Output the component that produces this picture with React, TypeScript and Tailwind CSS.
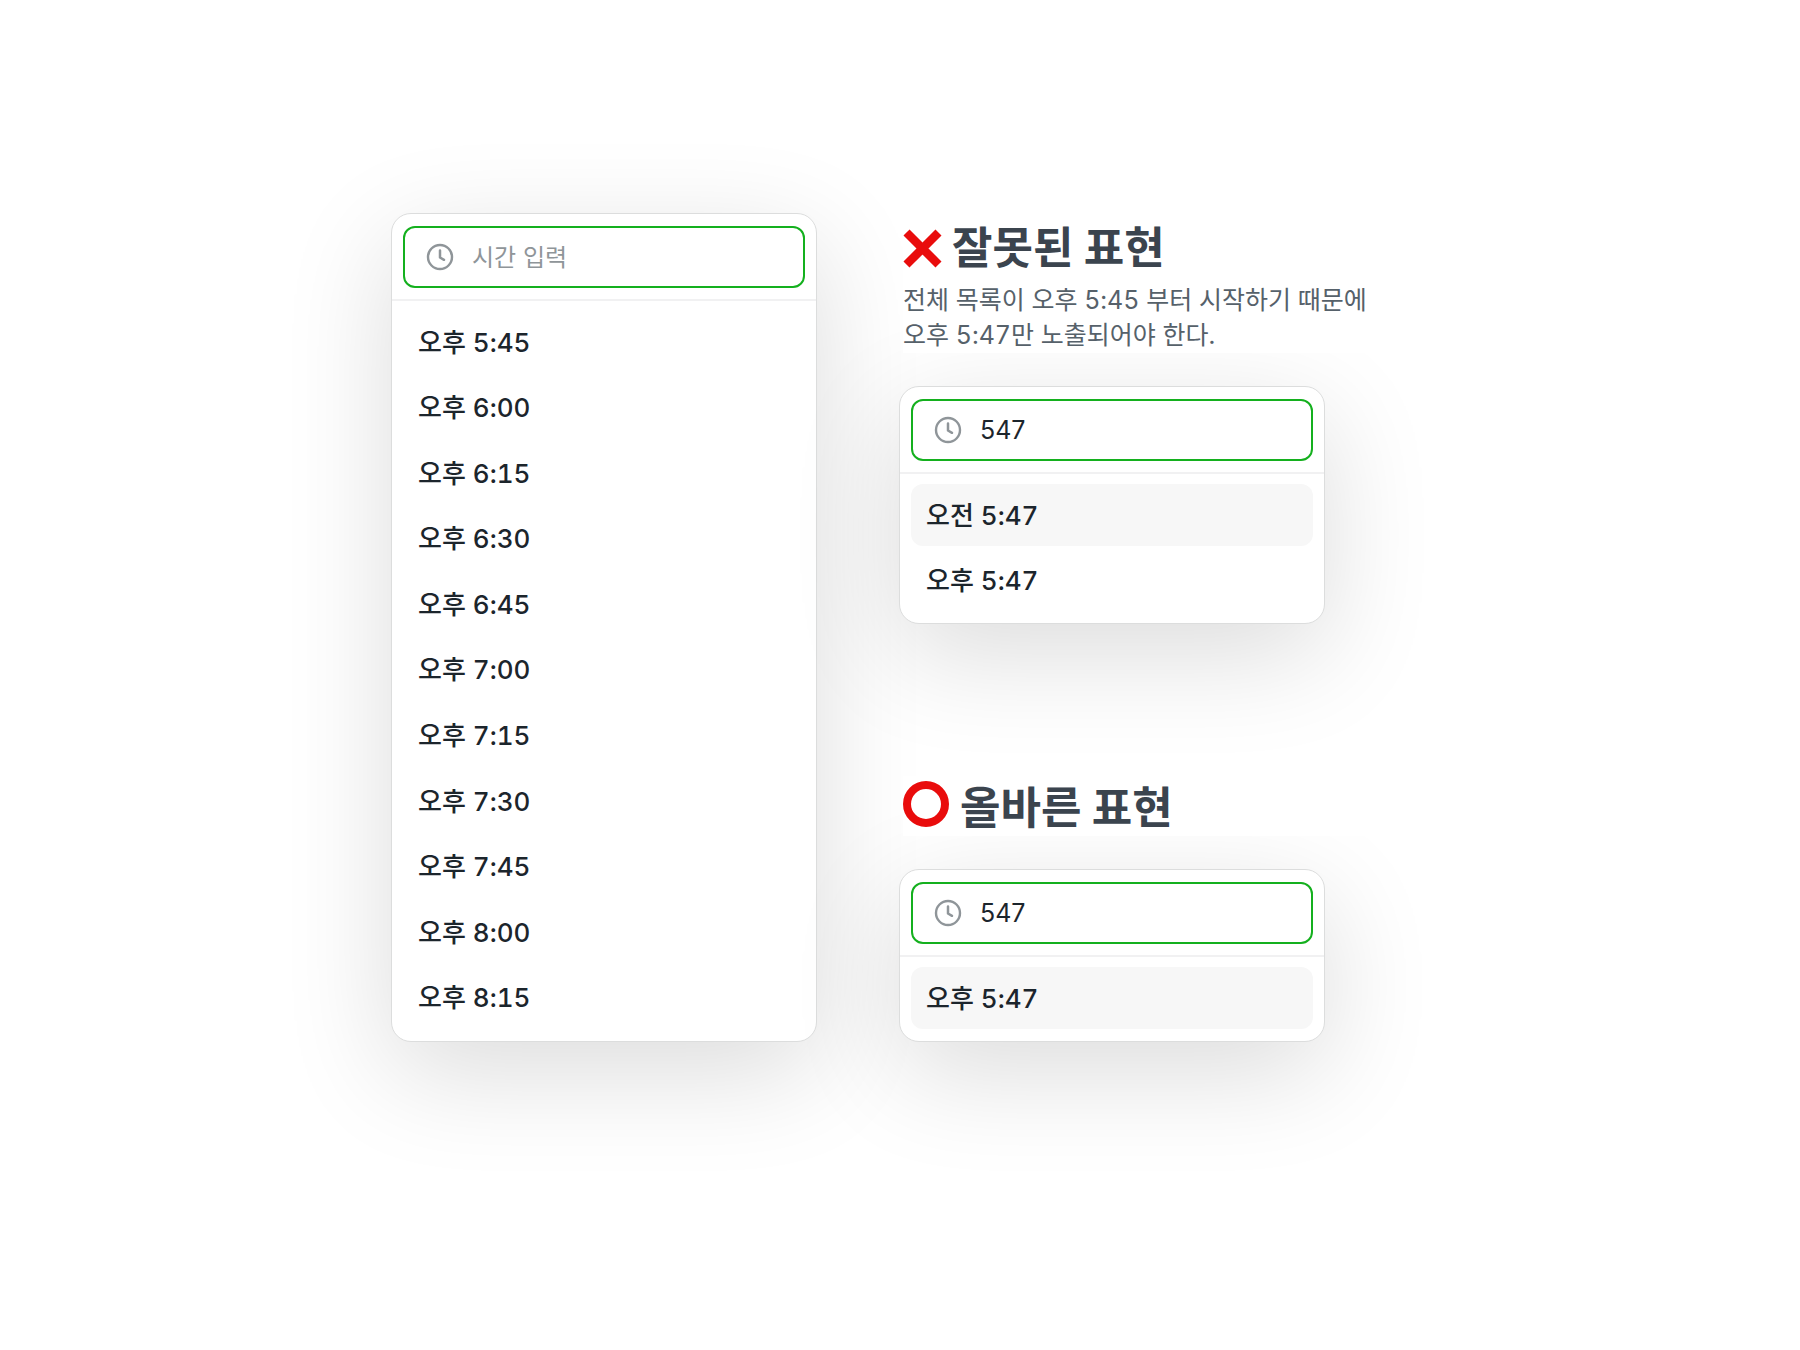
import { useId } from 'react'
import { clsx } from 'clsx'

const times = [
  '오후 5:45',
  '오후 6:00',
  '오후 6:15',
  '오후 6:30',
  '오후 6:45',
  '오후 7:00',
  '오후 7:15',
  '오후 7:30',
  '오후 7:45',
  '오후 8:00',
  '오후 8:15',
]

function ClockIcon() {
  return (
    <svg viewBox="0 0 28 28" fill="none" className="h-7 w-7 shrink-0 text-[#8f9599]" aria-hidden>
      <circle cx="14" cy="14" r="12" stroke="currentColor" strokeWidth="2.4" />
      <path
        d="M14 7.5V14.5L18 16.8"
        stroke="currentColor"
        strokeWidth="2.5"
        strokeLinecap="round"
        strokeLinejoin="round"
      />
    </svg>
  )
}

type TimePickerProps = {
  query?: string
  options: string[]
  active?: number
  className?: string
}

function TimePicker({ query = '', options, active, className }: TimePickerProps) {
  const id = useId()

  return (
    <div
      className={clsx(
        'flex flex-col rounded-[20px] border border-[#dcdddd] bg-white shadow-[0_30px_110px_rgba(0,0,0,0.14)]',
        className,
      )}
    >
      <div className="border-b-2 border-[#f1f1f2] px-[11px] pt-3 pb-[11px]">
        <label
          htmlFor={id}
          className="flex h-[62px] items-center gap-[18px] rounded-xl border-2 border-[#14b01e] px-[21px]"
        >
          <ClockIcon />
          <input
            id={id}
            type="text"
            aria-label="시간 입력"
            defaultValue={query}
            placeholder="시간 입력"
            className="w-full min-w-0 bg-transparent pt-[2px] text-[25px] text-[#1c252c] outline-none placeholder:text-2xl placeholder:text-[#8f9599]"
          />
        </label>
      </div>
      <ul className="flex grow flex-col justify-between gap-[3px] px-[11px] pt-[10px] pb-3">
        {options.map((time, i) => (
          <li key={time}>
            <button
              type="button"
              className={clsx(
                'flex h-[62px] w-full items-center rounded-xl px-[15px] text-[26px] font-medium tabular-nums text-[#1c252c]',
                i === active && 'bg-[#f7f7f7]',
              )}
            >
              {time}
            </button>
          </li>
        ))}
      </ul>
    </div>
  )
}

export default function App() {
  return (
    <main className="min-h-screen bg-white pt-[213px] pb-24 font-['Inter','Noto_Sans_CJK_KR',sans-serif]">
      <div className="mx-auto grid w-full max-w-[1018px] grid-cols-[426px_1fr] gap-x-[82px]">
        <TimePicker options={times} />

        <div className="flex flex-col">
          <section>
            <div className="relative z-10 ml-1 bg-white">
              <div className="flex h-[70px] items-center gap-[10px]">
                <svg viewBox="0 0 39 39" className="h-[39px] w-[39px]" aria-hidden>
                  <path d="M3.5 3.5L35.5 35.5M35.5 3.5L3.5 35.5" stroke="#e90c0c" strokeWidth="8.5" />
                </svg>
                <h2 className="text-[44px] leading-none font-bold text-[#3b444e]">잘못된 표현</h2>
              </div>
              <p className="text-[25px] leading-[35px] whitespace-nowrap tabular-nums text-[#56616a]">
                전체 목록이 오후 5:45 부터 시작하기 때문에
                <br />
                오후 5:47만 노출되어야 한다.
              </p>
            </div>
            <TimePicker
              query="547"
              options={['오전 5:47', '오후 5:47']}
              active={0}
              className="mt-[33px] w-[426px]"
            />
          </section>

          <section className="mt-[152px]">
            <div className="relative z-10 ml-1 flex h-[60px] items-center gap-[11px] bg-white pb-1">
              <svg viewBox="0 0 46 46" className="h-[46px] w-[46px]" aria-hidden>
                <circle cx="23" cy="23" r="19" fill="none" stroke="#e90c0c" strokeWidth="8" />
              </svg>
              <h2 className="pt-2 text-[44px] leading-none font-bold text-[#3b444e]">올바른 표현</h2>
            </div>
            <TimePicker
              query="547"
              options={['오후 5:47']}
              active={0}
              className="mt-[33px] w-[426px]"
            />
          </section>
        </div>
      </div>
    </main>
  )
}
